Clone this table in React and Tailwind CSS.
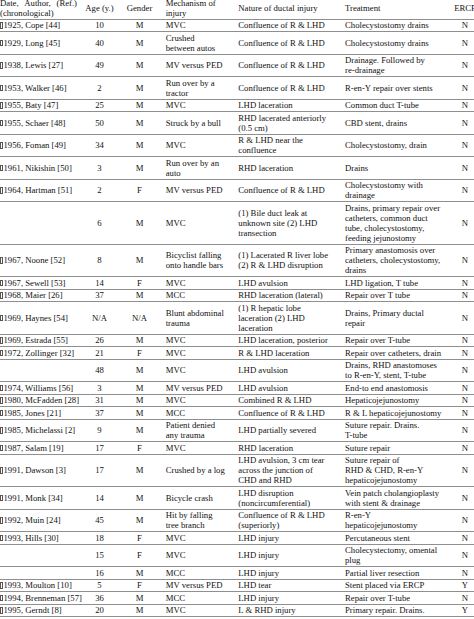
import React from "react";

const rows = [
  ["1925, Cope [44]", "10", "M", ["MVC"], ["Confluence of R & LHD"], ["Cholecystostomy drains"], "N"],
  ["1929, Long [45]", "40", "M", ["Crushed", "between autos"], ["Confluence of R & LHD"], ["Cholecystostomy drains"], "N"],
  ["1938, Lewis [27]", "49", "M", ["MV versus PED"], ["Confluence of R & LHD"], ["Drainage. Followed by", "re-drainage"], "N"],
  ["1953, Walker [46]", "2", "M", ["Run over by a", "tractor"], ["Confluence of R & LHD"], ["R-en-Y repair over stents"], "N"],
  ["1955, Baty [47]", "25", "M", ["MVC"], ["LHD laceration"], ["Common duct T-tube"], "N"],
  ["1955, Schaer [48]", "50", "M", ["Struck by a bull"], ["RHD lacerated anteriorly", "(0.5 cm)"], ["CBD stent, drains"], "N"],
  ["1956, Foman [49]", "34", "M", ["MVC"], ["R & LHD near the", "confluence"], ["Cholecystostomy, drain"], "N"],
  ["1961, Nikishin [50]", "3", "M", ["Run over by an", "auto"], ["RHD laceration"], ["Drains"], "N"],
  ["1964, Hartman [51]", "2", "F", ["MV versus PED"], ["Confluence of R & LHD"], ["Cholecystostomy with", "drainage"], "N"],
  ["", "6", "M", ["MVC"], ["(1) Bile duct leak at", "unknown site (2) LHD", "transection"], ["Drains, primary repair over", "catheters, common duct", "tube, cholecystostomy,", "feeding jejunostomy"], "N"],
  ["1967, Noone [52]", "8", "M", ["Bicyclist falling", "onto handle bars"], ["(1) Lacerated R liver lobe", "(2) R & LHD disruption"], ["Primary anastomosis over", "catheters, cholecystostomy,", "drains"], "N"],
  ["1967, Sewell [53]", "14", "F", ["MVC"], ["LHD avulsion"], ["LHD ligation, T tube"], "N"],
  ["1968, Maier [26]", "37", "M", ["MCC"], ["RHD laceration (lateral)"], ["Repair over T tube"], "N"],
  ["1969, Haynes [54]", "N/A", "N/A", ["Blunt abdominal", "trauma"], ["(1) R hepatic lobe", "laceration (2) LHD", "laceration"], ["Drains, Primary ductal", "repair"], "N"],
  ["1969, Estrada [55]", "26", "M", ["MVC"], ["LHD laceration, posterior"], ["Repair over T-tube"], "N"],
  ["1972, Zollinger [32]", "21", "F", ["MVC"], ["R & LHD laceration"], ["Repair over catheters, drain"], "N"],
  ["", "48", "M", ["MVC"], ["LHD avulsion"], ["Drains, RHD anastomoses", "to R-en-Y, stent, T-tube"], "N"],
  ["1974, Williams [56]", "3", "M", ["MV versus PED"], ["LHD avulsion"], ["End-to end anastomosis"], "N"],
  ["1980, McFadden [28]", "31", "M", ["MVC"], ["Combined R & LHD"], ["Hepaticojejunostomy"], "N"],
  ["1985, Jones [21]", "37", "M", ["MCC"], ["Confluence of R & LHD"], ["R & L hepaticojejunostomy"], "N"],
  ["1985, Michelassi [2]", "9", "M", ["Patient denied", "any trauma"], ["LHD partially severed"], ["Suture repair. Drains.", "T-tube"], "N"],
  ["1987, Salam [19]", "17", "F", ["MVC"], ["RHD laceration"], ["Suture repair"], "N"],
  ["1991, Dawson [3]", "17", "M", ["Crushed by a log"], ["LHD avulsion, 3 cm tear", "across the junction of", "CHD and RHD"], ["Suture repair of", "RHD & CHD, R-en-Y", "hepaticojejunostomy"], "N"],
  ["1991, Monk [34]", "14", "M", ["Bicycle crash"], ["LHD disruption", "(noncircumferential)"], ["Vein patch cholangioplasty", "with stent & drainage"], "N"],
  ["1992, Muin [24]", "45", "M", ["Hit by falling", "tree branch"], ["Confluence of R & LHD", "(superiorly)"], ["R-en-Y", "hepaticojejunostomy"], "N"],
  ["1993, Hills [30]", "18", "F", ["MVC"], ["LHD injury"], ["Percutaneous stent"], "N"],
  ["", "15", "F", ["MVC"], ["LHD injury"], ["Cholecystectomy, omental", "plug"], "N"],
  ["", "16", "M", ["MCC"], ["LHD injury"], ["Partial liver resection"], "N"],
  ["1993, Moulton [10]", "5", "F", ["MV versus PED"], ["LHD tear"], ["Stent placed via ERCP"], "Y"],
  ["1994, Brenneman [57]", "36", "M", ["MCC"], ["LHD injury"], ["Repair over T-tube"], "N"],
  ["1995, Gerndt [8]", "20", "M", ["MVC"], ["L & RHD injury"], ["Primary repair. Drains."], "Y"],
];

function Lines({ lines }) {
  return (
    <div>
      {lines.map((l, i) => (
        <div key={i} className="whitespace-nowrap">
          {l}
        </div>
      ))}
    </div>
  );
}

function Tofu() {
  return (
    <span className="inline-block w-[3px] h-[6.5px] border-[0.7px] border-[#555] mr-[0.5px] align-[-0.5px]" />
  );
}

const grid =
  "grid grid-cols-[80px_39px_41px_75px_107px_106px_34px] items-center border-b border-[#8f8f8f] py-[0.75px]";

export default function App() {
  return (
    <div className="w-[474px] h-[619px] overflow-hidden bg-white text-[#111] font-['Liberation_Serif',serif] text-[8.7px] leading-[10px]">
      <div className="w-[482px] -mt-[3px]">
        <div className={grid}>
          <div>
            <div className="flex justify-between w-[77px]">
              <span>Date,</span>
              <span>Author,</span>
              <span>(Ref.)</span>
            </div>
            <div>(chronological)</div>
          </div>
          <div className="text-center">Age (y.)</div>
          <div className="text-center">Gender</div>
          <div className="pl-[5.7px]">
            <Lines lines={["Mechanism of", "injury"]} />
          </div>
          <div className="pl-[3.3px]">Nature of ductal injury</div>
          <div className="pl-[3px]">Treatment</div>
          <div className="text-center">ERCP</div>
        </div>
        {rows.map((r, i) => (
          <div key={i} className={grid}>
            <div className="whitespace-nowrap">
              {r[0] ? (
                <>
                  <Tofu />
                  {r[0]}
                </>
              ) : null}
            </div>
            <div className="text-center">{r[1]}</div>
            <div className="text-center">{r[2]}</div>
            <div className="pl-[5.7px]">
              <Lines lines={r[3]} />
            </div>
            <div className="pl-[3.3px]">
              <Lines lines={r[4]} />
            </div>
            <div className="pl-[3px]">
              <Lines lines={r[5]} />
            </div>
            <div className="text-center">{r[6]}</div>
          </div>
        ))}
      </div>
    </div>
  );
}
